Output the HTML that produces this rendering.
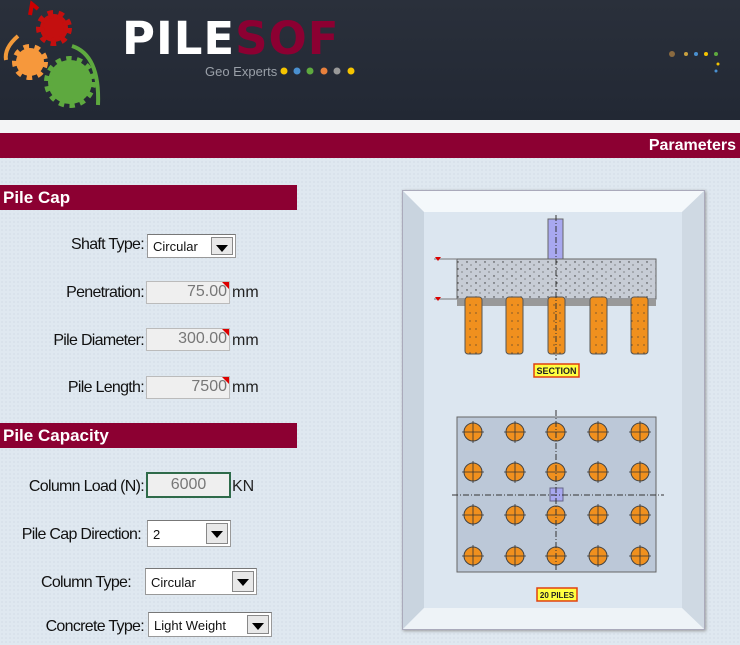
<!DOCTYPE html>
<html><head><style>
*{margin:0;padding:0;box-sizing:border-box}
body{width:740px;height:645px;overflow:hidden;font-family:"Liberation Sans",sans-serif;background-color:#dfe8f0;background-image:radial-gradient(#c8d3de 0.6px,transparent 0.8px);background-size:4px 4px;position:relative}
.a{position:absolute}
.hdr{left:0;top:0;width:740px;height:120px;background:linear-gradient(#2a303b,#222834)}
.bar{background:#8c0032;color:#fff;font-weight:bold;font-size:17px;padding-left:3px;line-height:25px;height:25px}
.lbl{font-size:16px;color:#111;text-align:right;letter-spacing:-0.7px}
.inp{background:#efefef;border:1px solid #bbb;font-size:16px;color:#777;text-align:right;padding-right:2px;line-height:20px}
.inp:after{content:"";position:absolute;right:0;top:0;border-top:7px solid #d00;border-left:7px solid transparent}
.sel{background:#fff;border:1px solid #999;border-top-color:#777;font-size:13px;color:#111;padding-left:5px}
.sel b{position:absolute;right:2px;top:2px;bottom:2px;width:22px;background:#e8e8e8;border:1px solid #888}
.sel b:after{content:"";position:absolute;left:4px;top:7px;border-top:7px solid #000;border-left:6px solid transparent;border-right:6px solid transparent}
.unit{font-size:16px;color:#222}
</style></head><body>
<div class="a hdr"></div>
<svg class="a" style="left:0;top:0" width="120" height="115">
<path d="M30 15 L32 4 L38 9" stroke="#c00" stroke-width="4" fill="none"/>
<circle cx="54" cy="28" r="14" fill="#c40f0f" stroke="#c40f0f" stroke-width="8" stroke-dasharray="5 5"/>
<path d="M18 36 Q4 48 6 60" stroke="#f29a3a" stroke-width="4" fill="none"/>
<circle cx="30" cy="62" r="14" fill="#f6983c" stroke="#f6983c" stroke-width="8" stroke-dasharray="5 5"/>
<circle cx="70" cy="82" r="22" fill="#5ea93f" stroke="#5ea93f" stroke-width="8" stroke-dasharray="5 5"/>
<path d="M72 46 Q100 55 98 105" stroke="#5ea93f" stroke-width="4" fill="none"/>
</svg>
<div class="a" style="left:122px;top:14px;font-size:45px;font-weight:900;letter-spacing:1px;line-height:50px;font-family:'DejaVu Sans','Liberation Sans',sans-serif"><span style="color:#fff">PILE</span><span style="color:#8c0032">SOF</span></div>
<div class="a" style="left:205px;top:64px;font-size:13px;color:#9aa0a8">Geo Experts</div>
<svg class="a" style="left:280px;top:66px" width="80" height="10"><circle cx="4" cy="5" r="3.5" fill="#f5c400"/><circle cx="17" cy="5" r="3.5" fill="#4a90d0"/><circle cx="30" cy="5" r="3.5" fill="#5ea93f"/><circle cx="44" cy="5" r="3.5" fill="#e8803c"/><circle cx="57" cy="5" r="3.5" fill="#999"/><circle cx="71" cy="5" r="3.5" fill="#f5c400"/></svg>
<svg class="a" style="left:666px;top:40px" width="60" height="35"><circle cx="6" cy="14" r="3" fill="#8a6a40"/><circle cx="20" cy="14" r="2" fill="#c8a040"/><circle cx="30" cy="14" r="2" fill="#4a90d0"/><circle cx="40" cy="14" r="2" fill="#f5c400"/><circle cx="50" cy="14" r="2" fill="#5ea93f"/><circle cx="52" cy="24" r="1.5" fill="#f5c400"/><circle cx="50" cy="31" r="1.5" fill="#4a90d0"/></svg>
<div class="a" style="left:0;top:120px;width:740px;height:13px;background:#f3f4f5"></div>
<div class="a bar" style="left:0;top:133px;width:740px;text-align:right;padding-right:4px;font-size:16px">Parameters</div>
<div class="a bar" style="left:0;top:185px;width:297px">Pile Cap</div>
<div class="a bar" style="left:0;top:423px;width:297px">Pile Capacity</div>

<div class="a lbl" style="left:0;top:236px;width:144px">Shaft Type:</div>
<div class="a sel" style="left:147px;top:234px;width:89px;height:24px;line-height:24px">Circular<b></b></div>
<div class="a lbl" style="left:0;top:284px;width:144px">Penetration:</div>
<div class="a inp" style="left:146px;top:281px;width:84px;height:23px">75.00</div><div class="a unit" style="left:232px;top:284px">mm</div>
<div class="a lbl" style="left:0;top:332px;width:144px">Pile Diameter:</div>
<div class="a inp" style="left:146px;top:328px;width:84px;height:23px">300.00</div><div class="a unit" style="left:232px;top:332px">mm</div>
<div class="a lbl" style="left:0;top:379px;width:144px">Pile Length:</div>
<div class="a inp" style="left:146px;top:376px;width:84px;height:23px">7500</div><div class="a unit" style="left:232px;top:379px">mm</div>

<div class="a lbl" style="left:0;top:478px;width:144px">Column Load (N):</div>
<div class="a" style="left:146px;top:472px;width:85px;height:26px;background:#efefef;border:2px solid #2f6b4a;font-size:16px;color:#777;text-align:center;line-height:22px">6000</div><div class="a unit" style="left:232px;top:478px">KN</div>
<div class="a lbl" style="left:0;top:526px;width:141px">Pile Cap Direction:</div>
<div class="a sel" style="left:147px;top:520px;width:84px;height:27px;line-height:27px">2<b></b></div>
<div class="a lbl" style="left:0;top:574px;width:131px">Column Type:</div>
<div class="a sel" style="left:145px;top:568px;width:112px;height:27px;line-height:27px">Circular<b></b></div>
<div class="a lbl" style="left:0;top:618px;width:144px">Concrete Type:</div>
<div class="a sel" style="left:148px;top:612px;width:124px;height:25px;line-height:25px">Light Weight<b></b></div>

<div class="a" style="left:402px;top:190px;width:303px;height:440px;background:#dce6f0;border:1px solid #aab;box-shadow:1px 1px 3px #999"></div>
<svg class="a" style="left:402px;top:190px" width="303" height="440">
<polygon points="1,1 302,1 280,22 22,22" fill="#f4f8fb"/>
<polygon points="1,1 22,22 22,418 1,439" fill="#c9d4df"/>
<polygon points="302,1 280,22 280,418 302,439" fill="#cfd9e3"/>
<polygon points="1,439 22,418 280,418 302,439" fill="#eef3f7"/>
<defs><pattern id="d" width="9" height="7" patternUnits="userSpaceOnUse"><rect width="9" height="7" fill="#c7ccd5"/><circle cx="2" cy="2" r=".7" fill="#333"/><circle cx="6" cy="5" r=".6" fill="#555"/></pattern>
<pattern id="o" width="6" height="8" patternUnits="userSpaceOnUse"><rect width="6" height="8" fill="#f0901e"/><circle cx="2" cy="3" r=".6" fill="#333"/></pattern></defs>
<rect x="146" y="29" width="15" height="41" fill="#a8a8f0" stroke="#666"/>
<rect x="55" y="69" width="199" height="40" fill="url(#d)" stroke="#666"/>
<rect x="55" y="109" width="199" height="7" fill="#999"/>
<g fill="url(#o)" stroke="#555">
<rect x="63" y="107" width="17" height="57" rx="3"/><rect x="104" y="107" width="17" height="57" rx="3"/><rect x="146" y="107" width="17" height="57" rx="3"/><rect x="188" y="107" width="17" height="57" rx="3"/><rect x="229" y="107" width="17" height="57" rx="3"/></g>
<path d="M154 25V170" stroke="#333" stroke-dasharray="6 2 1 2"/>
<path d="M32 69H55M32 109H55" stroke="#777"/>
<path d="M33 67l3 4 3-4zM33 107l3 4 3-4z" fill="#d00"/>
<rect x="132" y="174" width="45" height="13" fill="#ffff40" stroke="#e04010" stroke-width="1.5"/>
<text x="154.5" y="184" font-size="9" font-weight="bold" text-anchor="middle" fill="#222">SECTION</text>
<rect x="55" y="227" width="199" height="155" fill="#bcc8d8" stroke="#666"/>
<g fill="#f0901e" stroke="#444">
<circle cx="71" cy="242" r="9"/><circle cx="113" cy="242" r="9"/><circle cx="154" cy="242" r="9"/><circle cx="196" cy="242" r="9"/><circle cx="238" cy="242" r="9"/>
<circle cx="71" cy="282" r="9"/><circle cx="113" cy="282" r="9"/><circle cx="154" cy="282" r="9"/><circle cx="196" cy="282" r="9"/><circle cx="238" cy="282" r="9"/>
<circle cx="71" cy="325" r="9"/><circle cx="113" cy="325" r="9"/><circle cx="154" cy="325" r="9"/><circle cx="196" cy="325" r="9"/><circle cx="238" cy="325" r="9"/>
<circle cx="71" cy="366" r="9"/><circle cx="113" cy="366" r="9"/><circle cx="154" cy="366" r="9"/><circle cx="196" cy="366" r="9"/><circle cx="238" cy="366" r="9"/></g>
<g stroke="#333" stroke-width="0.8">
<path d="M60 242h22M102 242h22M143 242h22M185 242h22M227 242h22M60 282h22M102 282h22M143 282h22M185 282h22M227 282h22M60 325h22M102 325h22M143 325h22M185 325h22M227 325h22M60 366h22M102 366h22M143 366h22M185 366h22M227 366h22"/>
<path d="M71 231v22M113 231v22M196 231v22M238 231v22M71 271v22M113 271v22M196 271v22M238 271v22M71 314v22M113 314v22M196 314v22M238 314v22M71 355v22M113 355v22M196 355v22M238 355v22"/></g>
<rect x="148" y="298" width="13" height="13" fill="#a8a8f0" stroke="#668"/>
<path d="M154 220V382M50 305H262" stroke="#333" stroke-dasharray="6 2 1 2"/>
<rect x="135" y="398" width="40" height="13" fill="#ffff40" stroke="#e04010" stroke-width="1.5"/>
<text x="155" y="408" font-size="8" font-weight="bold" text-anchor="middle" fill="#222">20 PILES</text>
</svg>
</body></html>
